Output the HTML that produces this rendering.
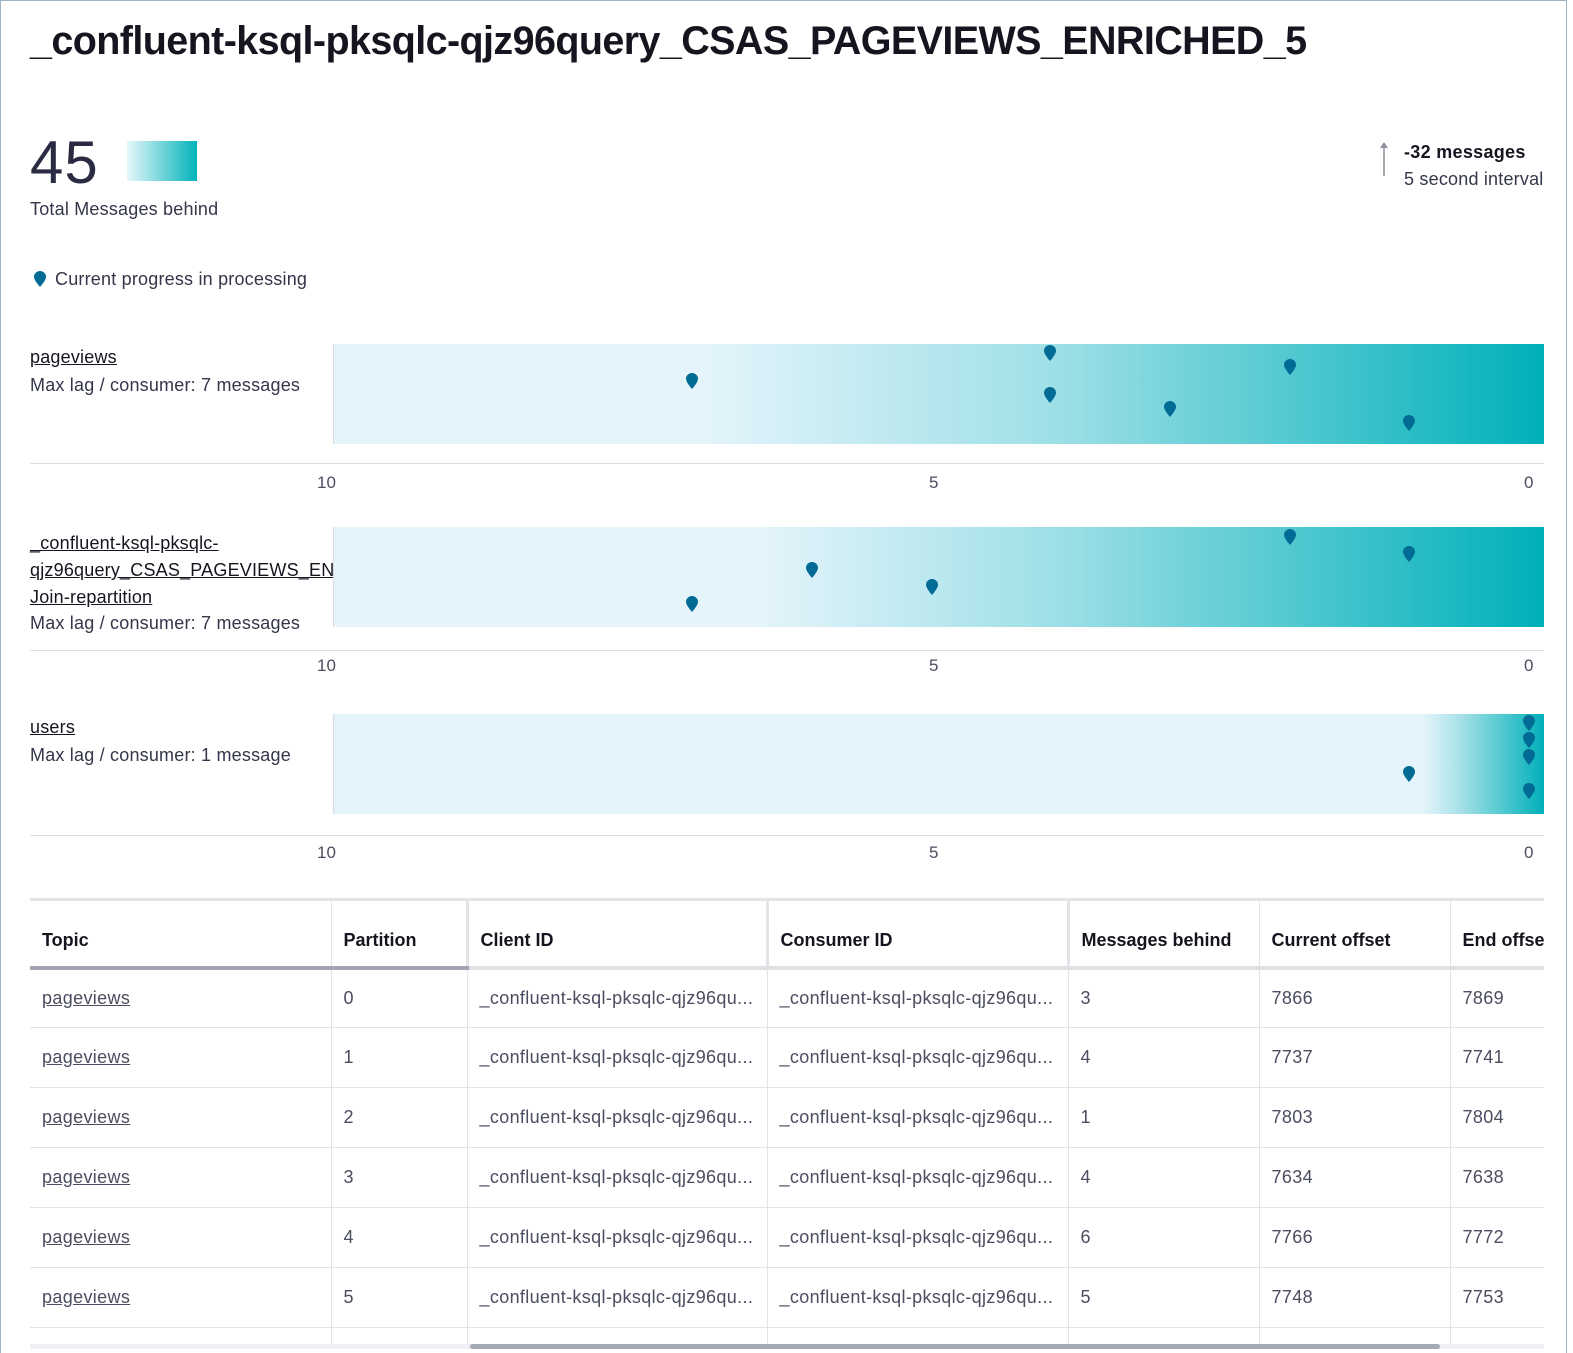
<!DOCTYPE html>
<html style="overflow:hidden"><head><meta charset="utf-8"><style>
*{margin:0;padding:0;box-sizing:border-box}
html,body{width:1573px;height:1353px;overflow:hidden}
body{background:#fff;font-family:"Liberation Sans",sans-serif;color:#1c1c28}
#w{position:relative;width:1573px;height:1353px;overflow:hidden}
.frame{position:absolute;left:0;top:0;width:1567px;height:1353px;border:1px solid #9fb3c3;border-bottom:none}
.a{position:absolute;white-space:nowrap}
h1{position:absolute;left:30px;top:19px;font-size:39.5px;font-weight:bold;letter-spacing:-0.6px;color:#15151f}
.sm{font-size:18px;color:#34364a;letter-spacing:0.2px}
.lnk{font-size:18px;color:#15151f;text-decoration:underline;letter-spacing:0.2px}
.bar{position:absolute;left:333px;width:1211px;height:100px;border-left:1px solid #d8dde3}
.axis{position:absolute;left:30px;width:1514px;height:1px;background:#dcdde3}
.tk{position:absolute;font-size:17px;color:#4b4d60}
.pin{position:absolute;width:12px;height:17px}
table{position:absolute;left:30px;top:898px;width:1514px;border-collapse:collapse;border-top:3px solid #e3e4e8;table-layout:fixed}
th{height:68px;text-align:left;font-size:18px;font-weight:bold;padding:14px 12px 0;color:#15151f;border-bottom:4px solid #e0e1e6;border-left:1px solid #e3e4e8;white-space:nowrap;overflow:hidden}
th.dk{border-bottom-color:#a4a5b3}
th.tl{border-left:3px solid #e3e4e8}
td{height:60px;font-size:18px;letter-spacing:0.35px;color:#4b4d60;padding:0 12px;border-bottom:1px solid #e3e4e8;border-left:1px solid #e3e4e8;white-space:nowrap;overflow:hidden}
th:first-child,td:first-child{border-left:none}
td a{color:#4b4d60;text-decoration:underline}
</style></head><body><div id="w">
<div class="frame"></div>
<h1>_confluent-ksql-pksqlc-qjz96query_CSAS_PAGEVIEWS_ENRICHED_5</h1>
<div class="a" style="left:30px;top:128px;font-size:60px;color:#2a2a42;letter-spacing:1px">45</div>
<div class="a" style="left:127px;top:141px;width:70px;height:40px;background:linear-gradient(90deg,#e6f7fa,#00b3b9)"></div>
<div class="a sm" style="left:30px;top:199px">Total Messages behind</div>
<svg class="a" style="left:1378px;top:141px" width="12" height="36"><path d="M6 2V35" stroke="#a9aab3" stroke-width="2"/><path d="M2 7L6 1 10 7z" fill="#8e8f99"/></svg>
<div class="a" style="left:1404px;top:142px;font-size:18px;font-weight:bold;color:#15151f;letter-spacing:0.3px">-32 messages</div>
<div class="a sm" style="left:1404px;top:169px">5 second interval</div>
<svg class="a" style="left:34px;top:271px" width="12" height="17"><path d="M6 0C2.7 0 0 2.6 0 5.8 0 9.5 6 16 6 16s6-6.5 6-10.2C12 2.6 9.3 0 6 0z" fill="#006b94"/></svg>
<div class="a sm" style="left:55px;top:269px">Current progress in processing</div>

<div class="a lnk" style="left:30px;top:347px">pageviews</div>
<div class="a sm" style="left:30px;top:375px">Max lag / consumer: 7 messages</div>
<div class="bar" style="top:344px;background:linear-gradient(90deg,#e5f4fb 0%,#e5f4fb 30%,#9ddfe6 60%,#00b0b9 100%)"></div>
<div class="axis" style="top:463px"></div>
<div class="tk" style="left:317px;top:473px">10</div><div class="tk" style="left:929px;top:473px">5</div><div class="tk" style="left:1524px;top:473px">0</div>

<div class="a lnk" style="left:30px;top:530px;line-height:27px">_confluent-ksql-pksqlc-<br>qjz96query_CSAS_PAGEVIEWS_ENRICHED_5<br>Join-repartition</div>
<div class="bar" style="top:527px;background:linear-gradient(90deg,#e5f4fb 0%,#e5f4fb 35%,#9ddfe6 60%,#00b0b9 100%)"></div>
<div class="a sm" style="left:30px;top:613px">Max lag / consumer: 7 messages</div>
<div class="axis" style="top:650px"></div>
<div class="tk" style="left:317px;top:656px">10</div><div class="tk" style="left:929px;top:656px">5</div><div class="tk" style="left:1524px;top:656px">0</div>

<div class="a lnk" style="left:30px;top:717px">users</div>
<div class="a sm" style="left:30px;top:745px">Max lag / consumer: 1 message</div>
<div class="bar" style="top:714px;background:linear-gradient(90deg,#e5f4fb 0%,#e5f4fb 90%,#a8e2e8 93%,#00b0b9 100%)"></div>
<div class="axis" style="top:835px"></div>
<div class="tk" style="left:317px;top:843px">10</div><div class="tk" style="left:929px;top:843px">5</div><div class="tk" style="left:1524px;top:843px">0</div>

<svg width="0" height="0" style="position:absolute"><defs><path id="p" d="M6 0C2.7 0 0 2.6 0 5.8 0 9.5 6 16 6 16s6-6.5 6-10.2C12 2.6 9.3 0 6 0z" fill="#006b94"/></defs></svg>
<svg class="pin" style="left:686px;top:373px"><use href="#p"/></svg>
<svg class="pin" style="left:1044px;top:345px"><use href="#p"/></svg>
<svg class="pin" style="left:1044px;top:387px"><use href="#p"/></svg>
<svg class="pin" style="left:1164px;top:401px"><use href="#p"/></svg>
<svg class="pin" style="left:1284px;top:359px"><use href="#p"/></svg>
<svg class="pin" style="left:1403px;top:415px"><use href="#p"/></svg>
<svg class="pin" style="left:686px;top:596px"><use href="#p"/></svg>
<svg class="pin" style="left:806px;top:562px"><use href="#p"/></svg>
<svg class="pin" style="left:926px;top:579px"><use href="#p"/></svg>
<svg class="pin" style="left:1284px;top:529px"><use href="#p"/></svg>
<svg class="pin" style="left:1403px;top:546px"><use href="#p"/></svg>
<svg class="pin" style="left:1403px;top:766px"><use href="#p"/></svg>
<svg class="pin" style="left:1523px;top:715px"><use href="#p"/></svg>
<svg class="pin" style="left:1523px;top:732px"><use href="#p"/></svg>
<svg class="pin" style="left:1523px;top:749px"><use href="#p"/></svg>
<svg class="pin" style="left:1523px;top:783px"><use href="#p"/></svg>

<table>
<colgroup><col style="width:301px"><col style="width:136px"><col style="width:300px"><col style="width:301px"><col style="width:191px"><col style="width:191px"><col style="width:94px"></colgroup>
<tr><th class="dk">Topic</th><th class="dk">Partition</th><th class="tl">Client ID</th><th class="tl">Consumer ID</th><th class="tl">Messages behind</th><th>Current offset</th><th>End offset</th></tr>
<tr><td><a>pageviews</a></td><td>0</td><td>_confluent-ksql-pksqlc-qjz96qu...</td><td>_confluent-ksql-pksqlc-qjz96qu...</td><td>3</td><td>7866</td><td>7869</td></tr>
<tr><td><a>pageviews</a></td><td>1</td><td>_confluent-ksql-pksqlc-qjz96qu...</td><td>_confluent-ksql-pksqlc-qjz96qu...</td><td>4</td><td>7737</td><td>7741</td></tr>
<tr><td><a>pageviews</a></td><td>2</td><td>_confluent-ksql-pksqlc-qjz96qu...</td><td>_confluent-ksql-pksqlc-qjz96qu...</td><td>1</td><td>7803</td><td>7804</td></tr>
<tr><td><a>pageviews</a></td><td>3</td><td>_confluent-ksql-pksqlc-qjz96qu...</td><td>_confluent-ksql-pksqlc-qjz96qu...</td><td>4</td><td>7634</td><td>7638</td></tr>
<tr><td><a>pageviews</a></td><td>4</td><td>_confluent-ksql-pksqlc-qjz96qu...</td><td>_confluent-ksql-pksqlc-qjz96qu...</td><td>6</td><td>7766</td><td>7772</td></tr>
<tr><td><a>pageviews</a></td><td>5</td><td>_confluent-ksql-pksqlc-qjz96qu...</td><td>_confluent-ksql-pksqlc-qjz96qu...</td><td>5</td><td>7748</td><td>7753</td></tr>
<tr><td></td><td></td><td></td><td></td><td></td><td></td><td></td></tr>
</table>
<div class="a" style="left:335px;top:520px;width:4px;height:0"></div>
<div class="a" style="left:0;top:1344px;width:1573px;height:9px;background:#fff"></div>
<div class="a" style="left:0;top:0;width:1px;height:1353px;background:#9fb3c3"></div>
<div class="a" style="left:1566px;top:0;width:1px;height:1353px;background:#9fb3c3"></div>
<div class="a" style="left:30px;top:1344px;width:1514px;height:5px;background:#eef0f3"></div>
<div class="a" style="left:470px;top:1344px;width:970px;height:5px;background:#a4aab6;border-radius:3px"></div>
</div></body></html>
